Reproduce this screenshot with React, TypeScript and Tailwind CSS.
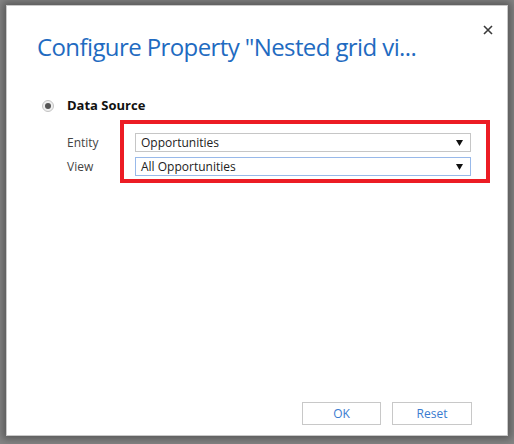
export default function App() {
  return (
    <div className="w-[514px] h-[444px] overflow-hidden bg-[#858585] pl-[6px] pt-[5px] font-['Open_Sans',sans-serif]">
      <div className="relative flex flex-col w-[502px] h-[431px] bg-white border border-[#c9c9c9] shadow-[0_0_8px_3px_rgba(0,0,0,0.35)]">
        <button className="absolute right-[13px] top-[18px] w-[12px] h-[12px] flex items-center justify-center">
          <svg width="10" height="10" viewBox="0 0 10 10">
            <path d="M1 1 L9 9 M9 1 L1 9" stroke="#3a3a3a" strokeWidth="1.6" />
          </svg>
        </button>

        <h1 className="pt-[23px] pl-[30px] text-[24px] leading-[36px] text-[#1f6bc1] tracking-[-0.6px]">
          Configure Property "Nested grid vi...
        </h1>

        <div className="mt-[31px] flex items-center h-[20px] pl-[35px]">
          <span className="w-[12px] h-[12px] rounded-full border border-[#c4c4c4] bg-[#efefef] flex items-center justify-center">
            <span className="w-[6px] h-[6px] rounded-full bg-[#555]" />
          </span>
          <span className="ml-[13px] text-[13px] font-bold text-[#111]">Data Source</span>
        </div>

        <div className="mt-[4px] flex pl-[60px]">
          <div className="w-[53px] pt-[13px] flex flex-col gap-[5px] text-[12px] text-[#444]">
            <span className="h-[19px] leading-[19px]">Entity</span>
            <span className="h-[19px] leading-[19px]">View</span>
          </div>
          <div className="w-[370px] border-[4px] border-[#ec1c24] pt-[9px] pb-[3px] pl-[11px] pr-[15px] flex flex-col gap-[5px]">
            <div className="h-[19px] border border-[#c6c6c6] flex items-center justify-between pl-[5px] pr-[7px] text-[12px] text-[#222]">
              <span>Opportunities</span>
              <svg width="7" height="6" viewBox="0 0 7 6">
                <path d="M0 0 H7 L3.5 6 Z" fill="#111" />
              </svg>
            </div>
            <div className="h-[19px] border border-[#98b9ea] flex items-center justify-between pl-[5px] pr-[7px] text-[12px] text-[#222]">
              <span>All Opportunities</span>
              <svg width="7" height="6" viewBox="0 0 7 6">
                <path d="M0 0 H7 L3.5 6 Z" fill="#111" />
              </svg>
            </div>
          </div>
        </div>

        <div className="mt-auto mb-[10px] mr-[35px] flex justify-end gap-[11px]">
          <button className="w-[79px] h-[23px] border border-[#c8c8c8] text-[12px] text-[#3a7bd0]">OK</button>
          <button className="w-[80px] h-[23px] border border-[#c8c8c8] text-[12px] text-[#3a7bd0]">Reset</button>
        </div>
      </div>
    </div>
  );
}
